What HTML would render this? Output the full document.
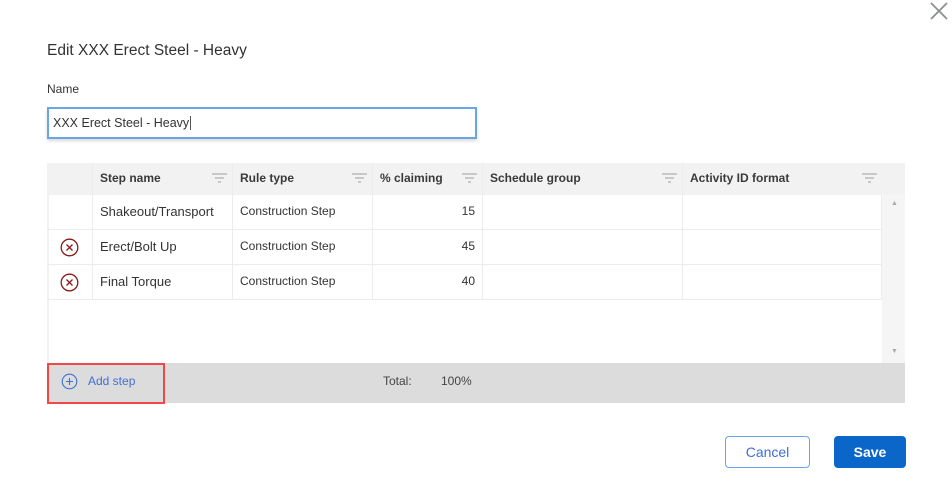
<!DOCTYPE html>
<html><head><meta charset="utf-8"><style>
*{box-sizing:border-box;margin:0;padding:0}
body{width:952px;height:499px;background:#fff;font-family:"Liberation Sans",sans-serif;position:relative;overflow:hidden;color:#333}
.a{position:absolute}
.hd{font-size:12px;font-weight:bold;color:#3a3a3a}
.cell{font-size:13px;color:#333}
.vl{position:absolute;width:1px;background:#ececec}
.hl{position:absolute;height:1px;background:#ececec}
</style></head><body>
<svg class="a" style="left:929px;top:1px" width="20" height="20" viewBox="0 0 20 20"><path d="M2 2L18 18M18 2L2 18" stroke="#8a8f8d" stroke-width="1.8"/></svg>
<div class="a" style="left:47px;top:42px;font-size:15.5px;color:#333">Edit XXX Erect Steel - Heavy</div>
<div class="a" style="left:47px;top:82px;font-size:12px;color:#333">Name</div>
<div class="a" style="left:47px;top:107px;width:430px;height:32px;border:2px solid #6aa6e6;box-shadow:0 2px 3px rgba(0,0,0,.15);font-size:12.5px;padding:7px 4px;color:#333">XXX Erect Steel - Heavy<span style="border-left:1px solid #555;margin-left:1px"></span></div>

<div class="a" style="left:47px;top:163px;width:858px;height:240px;background:#fff;border-left:2px solid #f2f2f2"></div>
<div class="a" style="left:47px;top:163px;width:858px;height:32px;background:#f2f2f2"></div>
<div class="a" style="left:882px;top:195px;width:23px;height:168px;background:#f5f5f5"></div>
<div class="a" style="left:891px;top:200px;font-size:7px;color:#aaa">▲</div>
<div class="a" style="left:891px;top:348px;font-size:7px;color:#aaa">▼</div>

<div class="vl" style="left:92px;top:163px;height:137px"></div>
<div class="vl" style="left:232px;top:163px;height:137px"></div>
<div class="vl" style="left:372px;top:163px;height:137px"></div>
<div class="vl" style="left:482px;top:163px;height:137px"></div>
<div class="vl" style="left:682px;top:163px;height:137px"></div>
<div class="vl" style="left:881px;top:195px;height:105px"></div>
<div class="hl" style="left:47px;top:229px;width:835px"></div>
<div class="hl" style="left:47px;top:264px;width:835px"></div>
<div class="hl" style="left:47px;top:299px;width:835px"></div>

<div class="a hd" style="left:100px;top:171px">Step name</div>
<div class="a hd" style="left:240px;top:171px">Rule type</div>
<div class="a hd" style="left:380px;top:171px">% claiming</div>
<div class="a hd" style="left:490px;top:171px">Schedule group</div>
<div class="a hd" style="left:690px;top:171px">Activity ID format</div>
<svg class="a" style="left:212px;top:173px" width="15" height="10"><path d="M0 1H15M3 5H12M6 9H9" stroke="#c8c8c8" stroke-width="2"/></svg>
<svg class="a" style="left:352px;top:173px" width="15" height="10"><path d="M0 1H15M3 5H12M6 9H9" stroke="#c8c8c8" stroke-width="2"/></svg>
<svg class="a" style="left:462px;top:173px" width="15" height="10"><path d="M0 1H15M3 5H12M6 9H9" stroke="#c8c8c8" stroke-width="2"/></svg>
<svg class="a" style="left:662px;top:173px" width="15" height="10"><path d="M0 1H15M3 5H12M6 9H9" stroke="#c8c8c8" stroke-width="2"/></svg>
<svg class="a" style="left:862px;top:173px" width="15" height="10"><path d="M0 1H15M3 5H12M6 9H9" stroke="#c8c8c8" stroke-width="2"/></svg>

<div class="a cell" style="left:100px;top:204px">Shakeout/Transport</div>
<div class="a cell" style="left:240px;top:204px;font-size:12px">Construction Step</div>
<div class="a cell" style="left:380px;top:204px;width:95px;text-align:right;font-size:12px">15</div>
<div class="a cell" style="left:100px;top:239px">Erect/Bolt Up</div>
<div class="a cell" style="left:240px;top:239px;font-size:12px">Construction Step</div>
<div class="a cell" style="left:380px;top:239px;width:95px;text-align:right;font-size:12px">45</div>
<div class="a cell" style="left:100px;top:274px">Final Torque</div>
<div class="a cell" style="left:240px;top:274px;font-size:12px">Construction Step</div>
<div class="a cell" style="left:380px;top:274px;width:95px;text-align:right;font-size:12px">40</div>
<svg class="a" style="left:60px;top:238px" width="19" height="19"><circle cx="9.5" cy="9.5" r="8.3" fill="none" stroke="#8b1a1a" stroke-width="1.3"/><path d="M6.5 6.5L12.5 12.5M12.5 6.5L6.5 12.5" stroke="#8b1a1a" stroke-width="1.3"/></svg>
<svg class="a" style="left:60px;top:273px" width="19" height="19"><circle cx="9.5" cy="9.5" r="8.3" fill="none" stroke="#8b1a1a" stroke-width="1.3"/><path d="M6.5 6.5L12.5 12.5M12.5 6.5L6.5 12.5" stroke="#8b1a1a" stroke-width="1.3"/></svg>

<div class="a" style="left:47px;top:363px;width:858px;height:40px;background:#dcdcdc"></div>
<div class="a" style="left:47px;top:363px;width:118px;height:41px;border:2px solid #f04848"></div>
<svg class="a" style="left:61px;top:373px" width="17" height="17"><circle cx="8.5" cy="8.5" r="7.3" fill="none" stroke="#3d6fd8" stroke-width="1.1"/><path d="M8.5 5V12M5 8.5H12" stroke="#3d6fd8" stroke-width="1.1"/></svg>
<div class="a" style="left:88px;top:374px;font-size:12px;color:#3d6fd8">Add step</div>
<div class="a" style="left:383px;top:374px;font-size:12px;color:#444">Total:</div>
<div class="a" style="left:441px;top:374px;font-size:12px;color:#444">100%</div>

<div class="a" style="left:725px;top:436px;width:85px;height:32px;border:1px solid #6aa6e6;border-radius:4px;font-size:14px;color:#3d6fd8;text-align:center;line-height:30px">Cancel</div>
<div class="a" style="left:834px;top:436px;width:72px;height:32px;background:#0a66c9;border-radius:4px;font-size:14px;font-weight:bold;color:#fff;text-align:center;line-height:32px">Save</div>
</body></html>
